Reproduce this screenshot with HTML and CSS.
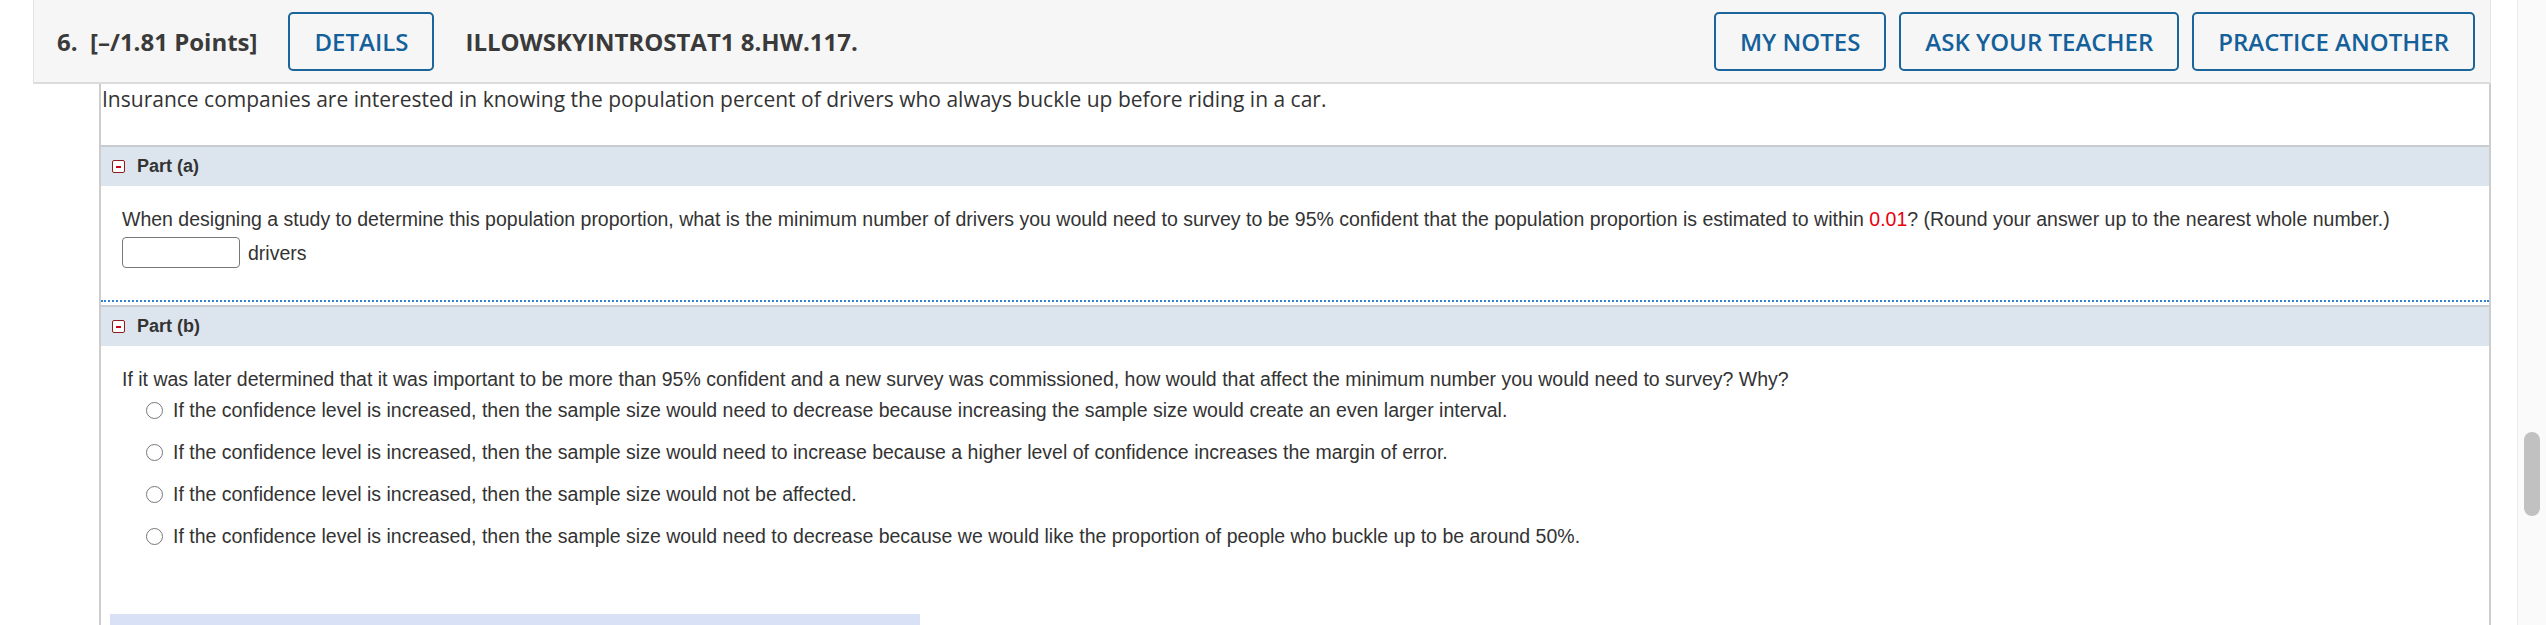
FILE: index.html
```html
<!DOCTYPE html>
<html lang="en">
<head>
  <meta charset="UTF-8" />
  <meta name="viewport" content="width=device-width, initial-scale=1.0" />
  <title>Question 6</title>
  <link rel="stylesheet" href="styles.css">
</head>
<body>
  <div class="page">
    <div class="question">
      <div class="q-header">
        <div class="q-number">6.&nbsp; [&ndash;/1.81 Points]</div>
        <button class="q-btn">DETAILS</button>
        <div class="q-code">ILLOWSKYINTROSTAT1 8.HW.117.</div>
        <div class="q-actions">
          <button class="q-btn">MY NOTES</button>
          <button class="q-btn">ASK YOUR TEACHER</button>
          <button class="q-btn">PRACTICE ANOTHER</button>
        </div>
      </div>

      <div class="q-body">
        <p class="intro">Insurance companies are interested in knowing the population percent of drivers who always buckle up before riding in a car.</p>

        <div class="part">
          <div class="part-head"><span class="toggle"></span>Part (a)</div>
          <div class="part-body part-a">
            <p class="prompt">When designing a study to determine this population proportion, what is the minimum number of drivers you would need to survey to be 95% confident that the population proportion is estimated to within <span class="red">0.01</span>? (Round your answer up to the nearest whole number.)</p>
            <div class="answer-row">
              <input type="text" class="answer">
              <span>drivers</span>
            </div>
          </div>
        </div>

        <div class="part">
          <div class="part-head"><span class="toggle"></span>Part (b)</div>
          <div class="part-body part-b">
            <p class="prompt">If it was later determined that it was important to be more than 95% confident and a new survey was commissioned, how would that affect the minimum number you would need to survey? Why?</p>
            <ul class="choices">
              <li><span class="radio"></span>If the confidence level is increased, then the sample size would need to decrease because increasing the sample size would create an even larger interval.</li>
              <li><span class="radio"></span>If the confidence level is increased, then the sample size would need to increase because a higher level of confidence increases the margin of error.</li>
              <li><span class="radio"></span>If the confidence level is increased, then the sample size would not be affected.</li>
              <li><span class="radio"></span>If the confidence level is increased, then the sample size would need to decrease because we would like the proportion of people who buckle up to be around 50%.</li>
            </ul>
            <div class="submit-bar"></div>
          </div>
        </div>
      </div>
    </div>
  </div>

  <div class="scrollbar"><div class="thumb"></div></div>
</body>
</html>
```

FILE: styles.css
```css
html, body {
  height: 100%;
  overflow: hidden;
}
body {
  margin: 0;
  display: flex;
  background-color: #fff;
  font-family: "Liberation Sans", Arial, sans-serif;
  color: #333;
}
.page {
  flex: 1;
  padding-left: 33px;
  padding-right: 26px;
}
.q-header {
  display: flex;
  align-items: center;
  gap: 31px;
  height: 82px;
  padding: 0 15px 0 23px;
  background-color: #f6f6f6;
  border-left: 1px solid #e4e4e4;
  border-right: 1px solid #e4e4e4;
  border-bottom: 2px solid #dcdcdc;
  font-family: "Open Sans", sans-serif;
  font-weight: 700;
  font-size: 24px;
  color: #3a3a3a;
}
.q-btn {
  height: 59px;
  padding: 0 24px;
  background: transparent;
  border: 2px solid #1b659a;
  border-radius: 5px;
  font-family: "Open Sans", sans-serif;
  font-weight: 600;
  font-size: 24px;
  color: #14609a;
}
.q-actions {
  display: flex;
  gap: 13px;
  margin-left: auto;
}
.q-body {
  margin-left: 66px;
  min-height: 560px;
  border-left: 2px solid #cdcdcd;
  border-right: 2px solid #cdcdcd;
}
.intro {
  margin: 0;
  padding: 0 0 31px 1px;
  font-family: "Open Sans", sans-serif;
  font-size: 21px;
  line-height: 30px;
  color: #333;
}
.part + .part {
  margin-top: 3px;
}
.part-head {
  display: flex;
  align-items: center;
  height: 39px;
  padding-left: 11px;
  background-color: #dce5ee;
  border-top: 2px solid #c8ccd1;
  font-weight: bold;
  font-size: 18px;
}
.toggle {
  position: relative;
  width: 11px;
  height: 11px;
  margin-right: 12px;
  border: 1.5px solid #8e1c1c;
  border-radius: 2px;
  background-color: #fff;
}
.toggle::after {
  content: "";
  position: absolute;
  left: 3px;
  right: 3px;
  top: 4.5px;
  height: 2px;
  background-color: #d0021b;
}
.part-body {
  font-size: 19.5px;
  line-height: 24px;
}
.part-a {
  padding: 21px 21px 32px;
  border-bottom: 2px dotted #2f82d4;
}
.part-b {
  padding: 21px 21px 0;
}
.prompt {
  margin: 0;
}
.red {
  color: #e8000b;
}
.answer-row {
  display: flex;
  align-items: center;
  gap: 8px;
  margin-top: 6px;
}
.answer {
  width: 118px;
  height: 31px;
  box-sizing: border-box;
  margin: 0;
  border: 1px solid #777;
  border-radius: 4px;
}
.choices {
  list-style: none;
  margin: 7px 0 0;
  padding: 0 0 0 24px;
}
.choices li {
  display: flex;
  align-items: center;
  margin-bottom: 18px;
}
.radio {
  width: 15px;
  height: 15px;
  margin-right: 10px;
  border: 1px solid #777;
  border-radius: 50%;
  flex-shrink: 0;
}
.submit-bar {
  width: 810px;
  height: 30px;
  margin-top: 66px;
  margin-left: -12px;
  background-color: #d9e1f6;
}
.scrollbar {
  width: 28px;
  background-color: #fafafa;
  border-left: 1px solid #ececec;
}
.thumb {
  width: 16px;
  height: 84px;
  margin: 432px 0 0 6px;
  border-radius: 8px;
  background-color: #c1c1c1;
}
```
